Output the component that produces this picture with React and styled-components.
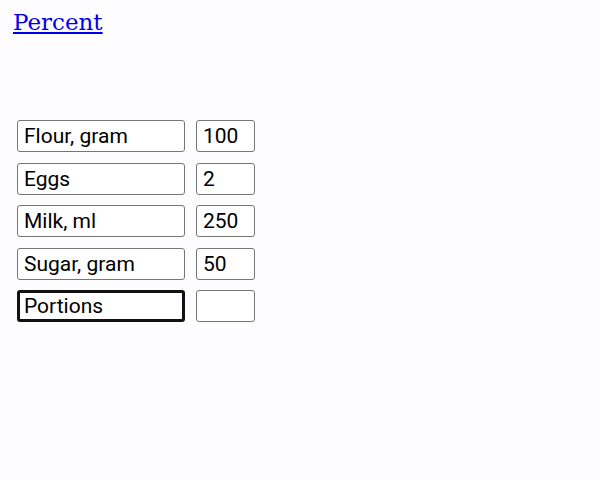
import React, { useEffect, useRef } from "react";
import styled, { createGlobalStyle } from "styled-components";

const Global = createGlobalStyle`
  html, body { background: #fdfcff; }
  body { margin: 8px; }
`;

const TitleLink = styled.a`
  display: inline-block;
  margin-left: 5px;
  font-family: "DejaVu Serif", serif;
  font-size: 23px;
  color: #0000ee;
  text-decoration: underline;
  line-height: 28px;
`;

const Form = styled.div`
  display: flex;
  flex-direction: column;
  gap: 10.5px;
  margin-top: 84px;
  padding-left: 9px;
`;

const Row = styled.div`
  display: flex;
  gap: 11px;
`;

const Field = styled.input`
  box-sizing: border-box;
  width: ${(p) => p.$w}px;
  height: 32px;
  padding: 0 6px;
  font-family: Roboto, "Noto Sans", sans-serif;
  font-size: 21px;
  color: #000;
  background: #fff;
  border: ${(p) => (p.$focus ? "3px solid #111" : "1px solid #767676")};
  padding-left: ${(p) => (p.$focus ? "4px" : "6px")};
  border-radius: 3px;
  outline: none;
  caret-color: #000;
`;

const rows = [
  ["Flour, gram", "100"],
  ["Eggs", "2"],
  ["Milk, ml", "250"],
  ["Sugar, gram", "50"],
  ["Portions", ""],
];

export default function App() {
  const ref = useRef(null);
  useEffect(() => {
    const el = ref.current;
    if (el) {
      el.focus();
      el.setSelectionRange(el.value.length, el.value.length);
    }
  }, []);
  return (
    <>
      <Global />
      <TitleLink href="#">Percent</TitleLink>
      <Form>
        {rows.map(([name, val], i) => (
          <Row key={i}>
            <Field
              $w={168}
              defaultValue={name}
              $focus={i === 4}
              ref={i === 4 ? ref : undefined}
            />
            <Field $w={59} defaultValue={val} />
          </Row>
        ))}
      </Form>
    </>
  );
}
